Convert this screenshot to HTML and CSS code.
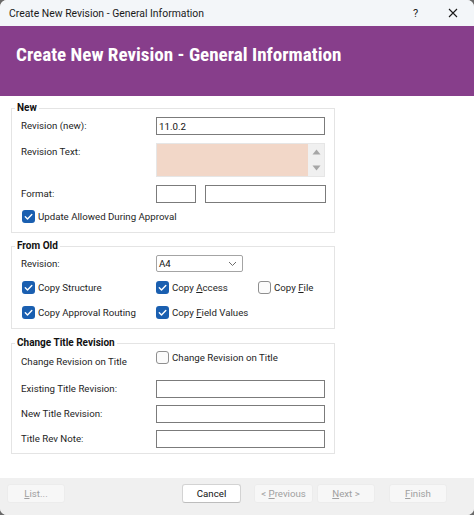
FILE: index.html
```html
<!DOCTYPE html>
<html lang="en">
<head>
<meta charset="utf-8">
<title>Create New Revision - General Information</title>
<link rel="stylesheet" href="styles.css">
</head>
<body>
<div class="window">
  <div class="titlebar">
    <span class="title">Create New Revision - General Information</span>
    <span class="help">?</span>
    <span class="close"><svg width="10" height="10" viewBox="0 0 10 10"><path d="M1 1 L9 9 M9 1 L1 9" stroke="#1a1a1a" stroke-width="1.1" fill="none"/></svg></span>
  </div>
  <div class="banner"><h1>Create New Revision - General Information</h1></div>
  <div class="content">
    <fieldset class="group g-new">
      <legend>New</legend>
      <div class="row">
        <span class="lbl">Revision (new):</span>
        <input class="field w170" type="text" value="11.0.2">
      </div>
      <div class="row mt8">
        <span class="lbl">Revision Text:</span>
        <div class="memo">
          <div class="memo-fill"></div>
          <div class="memo-scroll">
            <svg width="9" height="6" viewBox="0 0 9 6"><path d="M0.5 5.5 L4.5 0.5 L8.5 5.5 Z" fill="#a6a6a6"/></svg>
            <svg width="9" height="6" viewBox="0 0 9 6"><path d="M0.5 0.5 L4.5 5.5 L8.5 0.5 Z" fill="#a6a6a6"/></svg>
          </div>
        </div>
      </div>
      <div class="row mt8">
        <span class="lbl">Format:</span>
        <input class="field w40" type="text" value="">
        <input class="field w121" type="text" value="">
      </div>
      <div class="cbrow mt4">
        <span class="cbitem first"><span class="cb on"><svg width="13" height="13" viewBox="0 0 13 13"><path d="M3.3 6.7 L5.5 8.9 L9.8 4.4" stroke="#fff" stroke-width="1.4" fill="none" stroke-linecap="round" stroke-linejoin="round"/></svg></span><span class="cbtext">Update Allowed During Approval</span></span>
      </div>
    </fieldset>

    <fieldset class="group g-old">
      <legend>From Old</legend>
      <div class="row">
        <span class="lbl lbl17">Revision:</span>
        <div class="select"><span>A4</span><svg width="9" height="6" viewBox="0 0 9 6"><path d="M1 1 L4.5 4.5 L8 1" stroke="#6d6d6d" stroke-width="1" fill="none"/></svg></div>
      </div>
      <div class="cbgrid mt6">
        <span class="cbitem first"><span class="cb on"><svg width="13" height="13" viewBox="0 0 13 13"><path d="M3.3 6.7 L5.5 8.9 L9.8 4.4" stroke="#fff" stroke-width="1.4" fill="none" stroke-linecap="round" stroke-linejoin="round"/></svg></span><span class="cbtext">Copy Structure</span></span>
        <span class="cbitem"><span class="cb on"><svg width="13" height="13" viewBox="0 0 13 13"><path d="M3.3 6.7 L5.5 8.9 L9.8 4.4" stroke="#fff" stroke-width="1.4" fill="none" stroke-linecap="round" stroke-linejoin="round"/></svg></span><span class="cbtext">Copy <u>A</u>ccess</span></span>
        <span class="cbitem"><span class="cb off"></span><span class="cbtext">Copy <u>F</u>ile</span></span>
      </div>
      <div class="cbgrid mt7">
        <span class="cbitem first"><span class="cb on"><svg width="13" height="13" viewBox="0 0 13 13"><path d="M3.3 6.7 L5.5 8.9 L9.8 4.4" stroke="#fff" stroke-width="1.4" fill="none" stroke-linecap="round" stroke-linejoin="round"/></svg></span><span class="cbtext">Copy Approval Routing</span></span>
        <span class="cbitem"><span class="cb on"><svg width="13" height="13" viewBox="0 0 13 13"><path d="M3.3 6.7 L5.5 8.9 L9.8 4.4" stroke="#fff" stroke-width="1.4" fill="none" stroke-linecap="round" stroke-linejoin="round"/></svg></span><span class="cbtext">Copy <u>F</u>ield Values</span></span>
      </div>
    </fieldset>

    <fieldset class="group g-title">
      <legend>Change Title Revision</legend>
      <div class="row">
        <span class="lbl lbl-low">Change Revision on Title</span>
        <span class="cbitem"><span class="cb off"></span><span class="cbtext">Change Revision on Title</span></span>
      </div>
      <div class="row mt9">
        <span class="lbl">Existing Title Revision:</span>
        <input class="field w170" type="text" value="">
      </div>
      <div class="row mt7">
        <span class="lbl">New Title Revision:</span>
        <input class="field w170" type="text" value="">
      </div>
      <div class="row mt7">
        <span class="lbl">Title Rev Note:</span>
        <input class="field w170" type="text" value="">
      </div>
    </fieldset>
  </div>
  <div class="footer">
    <span class="btn disabled"><span><u>L</u>ist...</span></span>
    <span class="btn primary b-cancel"><span>Cancel</span></span>
    <span class="btn disabled b-prev"><span>&lt; <u>P</u>revious</span></span>
    <span class="btn disabled b-next"><span><u>N</u>ext &gt;</span></span>
    <span class="btn disabled b-finish"><span><u>F</u>inish</span></span>
  </div>
</div>
</body>
</html>
```

FILE: styles.css
```css
* { box-sizing: border-box; }
html, body { margin: 0; padding: 0; }
body {
  background: #6a6a6a;
  font-family: Roboto, "Liberation Sans", Arial, sans-serif;
  color: #1b1b1b;
}
.window {
  width: 474px;
  height: 515px;
  background: #ffffff;
  display: flex;
  flex-direction: column;
  border-radius: 7px;
  overflow: hidden;
}

/* title bar */
.titlebar {
  height: 26px;
  flex: none;
  background: #f3f6f9;
  display: flex;
  align-items: center;
  padding-left: 9px;
  font-size: 10.4px;
  color: #1a1a1a;
}
.title { flex: 1; }
.help {
  font-size: 11px;
  width: 8px;
  margin-right: 27px;
  color: #222;
}
.close {
  width: 10px;
  height: 10px;
  margin-right: 16px;
  display: flex;
}

/* purple banner */
.banner {
  height: 70px;
  flex: none;
  background: #873e8b;
  padding: 17px 0 0 16px;
}
.banner h1 {
  margin: 0;
  font-family: "Liberation Sans Narrow", "Roboto Condensed", "Liberation Sans", sans-serif;
  font-weight: 700;
  font-size: 19.1px;
  line-height: 24px;
  color: #ffffff;
}

/* content */
.content {
  flex: 1;
  padding: 6px 0 0 11px;
  font-size: 9.7px;
}
.group {
  width: 324px;
  margin: 0;
  padding: 3px 9px 7px 9px;
  border: 1px solid #e4e4e4;
  min-width: 0;
}
.group legend {
  font-weight: 700;
  font-size: 10px;
  line-height: 12px;
  padding: 0 2px;
  margin-left: -6px;
  color: #111;
}
.g-old { margin-top: 7px; }
.g-title { margin-top: 8px; padding-top: 2px; padding-bottom: 5px; }

.row {
  display: flex;
  align-items: flex-start;
}
.lbl {
  width: 135px;
  flex: none;
  line-height: 18px;
  color: #1e1e1e;
}
.lbl17 { line-height: 17px; }
.lbl-low { padding-top: 2px; }
.mt4 { margin-top: 4px; }
.mt6 { margin-top: 6px; }
.mt7 { margin-top: 7px; }
.mt8 { margin-top: 8px; }
.mt9 { margin-top: 9px; }

.field {
  height: 18px;
  border: 1px solid #7b7b7b;
  border-radius: 0;
  background: #fff;
  font-family: Roboto, "Liberation Sans", Arial, sans-serif;
  font-size: 9.7px;
  color: #111;
  padding: 0 2px;
  margin: 0;
  outline: none;
}
.w170 { width: 170px; }
.w40 { width: 40px; }
.w121 { width: 121px; margin-left: 9px; }

.memo {
  width: 170px;
  height: 34px;
  border: 1px solid #e6e6e6;
  display: flex;
}
.memo-fill {
  flex: 1;
  background: #f2d7c8;
}
.memo-scroll {
  width: 16px;
  background: #f0f0f0;
  display: flex;
  flex-direction: column;
  align-items: center;
  justify-content: space-between;
  padding: 5px 0 5px;
}

.select {
  width: 87px;
  height: 17px;
  border: 1px solid #a4a4a4;
  border-radius: 2px;
  display: flex;
  align-items: center;
  justify-content: space-between;
  padding: 0 5px 0 2px;
  color: #111;
}

.cbrow {
  display: flex;
  align-items: center;
  height: 18px;
}
.cbgrid {
  display: grid;
  grid-template-columns: 135px 102px auto;
  align-items: center;
  height: 18px;
}
.cbitem {
  display: flex;
  align-items: center;
  gap: 3px;
  white-space: nowrap;
  color: #1e1e1e;
}
.cbitem.first { margin-left: 1px; }
.cb {
  width: 13px;
  height: 13px;
  border-radius: 3px;
  flex: none;
  display: flex;
}
.cb.on { background: #1a5fb0; }
.cb.off {
  background: #fbfbfb;
  border: 1px solid #8f8f8f;
}
u { text-decoration: underline; text-underline-offset: 1px; }

/* footer */
.footer {
  height: 37px;
  flex: none;
  background: #f0f0f0;
  display: flex;
  align-items: flex-start;
  padding: 6px 0 0 7px;
}
.btn {
  width: 58px;
  height: 19px;
  border-radius: 3px;
  display: flex;
  align-items: center;
  justify-content: center;
  font-size: 9.7px;
  white-space: nowrap;
}
.btn.disabled {
  background: #f7f7f7;
  border: 1px solid #ececec;
  color: #a0a0a0;
}
.btn.primary {
  background: #ffffff;
  border: 1px solid #d3d3d3;
  border-bottom-color: #bdbdbd;
  color: #111;
}
.b-cancel { width: 59px; margin-left: 117px; }
.b-prev { width: 59px; margin-left: 13px; }
.b-next { margin-left: 4px; }
.b-finish { margin-left: 14px; }
```
